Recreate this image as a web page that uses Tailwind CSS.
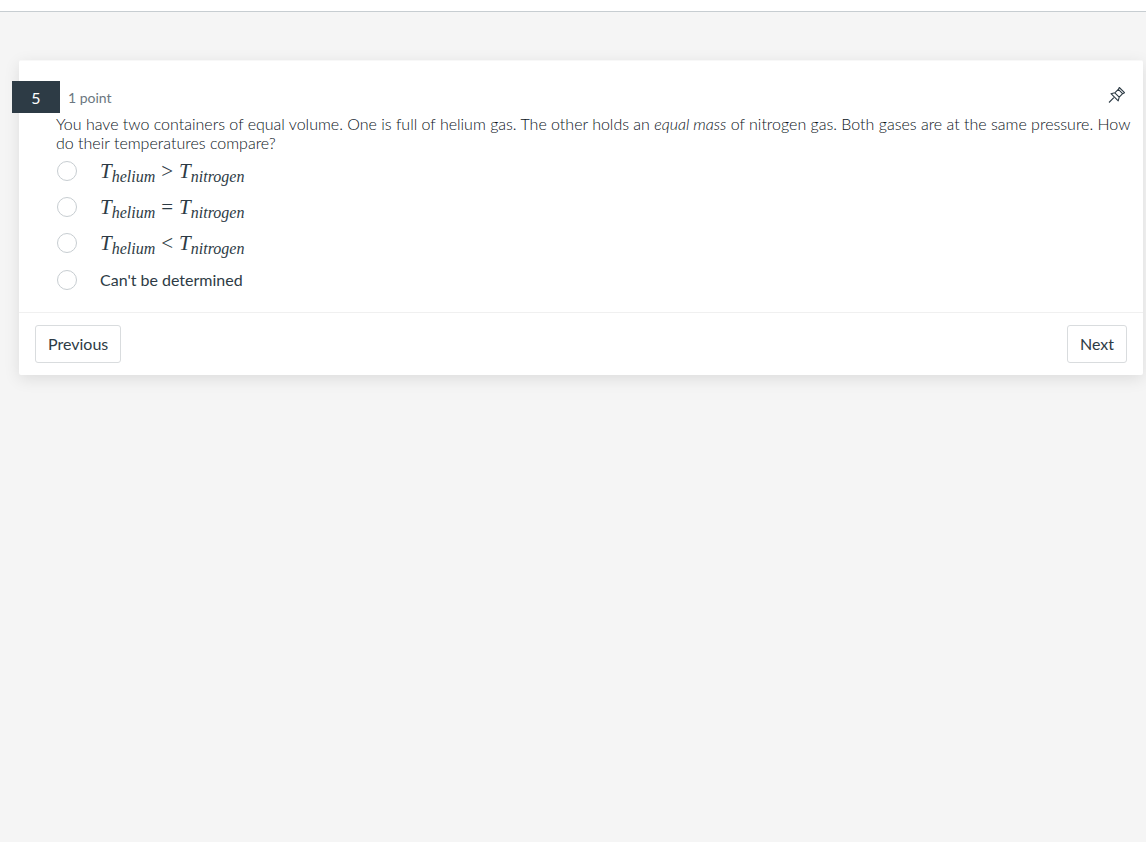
<!DOCTYPE html>
<html lang="en">
<head>
<meta charset="utf-8">
<meta name="viewport" content="width=device-width, initial-scale=1">
<title>Question 5</title>
<script src="https://cdn.jsdelivr.net/npm/@tailwindcss/browser@4"></script>
</head>
<body class="min-h-screen bg-[#f5f5f5] font-['Lato',sans-serif] text-base text-[#2d3b45]">
<header class="h-3 border-b border-[#c7cdd1] bg-white"></header>
<main class="pt-12 pr-[3px] pl-[19px]">
  <form class="rounded-xs border-t border-[#f8f8f8] bg-white shadow-[0_4px_16px_rgba(0,0,0,0.1)]">
    <div class="-ml-[7px] flex items-start pt-5 pr-4">
      <div class="flex h-8 w-12 items-center justify-center bg-[#2d3b45] pt-0.5 text-white">5</div>
      <div class="pt-[7px] pl-2 text-sm leading-5 text-[#6b7780]">1 point</div>
      <button type="button" aria-label="Pin question" class="mt-1 ml-auto">
        <svg class="size-5" viewBox="0 0 20 20" fill="none" stroke="currentColor" stroke-width="1.1" stroke-linejoin="round"><path d="M2 17.5 6.8 12.7M12.3 2.5 17.5 7.7 15.6 8.7 12.2 12.2 11.2 15.9 4 8.7 7.8 7.8 11.3 4.4ZM7.8 7.8 12.2 12.2M11.3 4.4 15.6 8.7"/></svg>
      </button>
    </div>
    <fieldset class="pr-1 pb-3 pl-[37px]">
      <legend class="pt-px pb-px leading-[19px] font-light text-[#0b141b]">You have two containers of equal volume. One is full of helium gas. The other holds an <em>equal mass</em> of nitrogen gas. Both gases are at the same pressure. How do their temperatures compare?</legend>
      <div class="flex flex-col">
        <label class="flex h-9 items-center"><input type="radio" name="answer" class="ml-px size-5 appearance-none rounded-full border border-[#c7cdd1] bg-white checked:border-[6px] checked:border-[#2d3b45]"><span class="ml-[23px] pt-0.5 font-['Liberation_Serif',serif] text-[21px] leading-6 whitespace-nowrap"><i>T</i><sub class="text-base italic">helium</sub><span class="mx-1.5">&gt;</span><i>T</i><sub class="text-base italic">nitrogen</sub></span></label>
        <label class="flex h-9 items-center"><input type="radio" name="answer" class="ml-px size-5 appearance-none rounded-full border border-[#c7cdd1] bg-white checked:border-[6px] checked:border-[#2d3b45]"><span class="ml-[23px] pt-0.5 font-['Liberation_Serif',serif] text-[21px] leading-6 whitespace-nowrap"><i>T</i><sub class="text-base italic">helium</sub><span class="mx-1.5">=</span><i>T</i><sub class="text-base italic">nitrogen</sub></span></label>
        <label class="flex h-9 items-center"><input type="radio" name="answer" class="ml-px size-5 appearance-none rounded-full border border-[#c7cdd1] bg-white checked:border-[6px] checked:border-[#2d3b45]"><span class="ml-[23px] pt-0.5 font-['Liberation_Serif',serif] text-[21px] leading-6 whitespace-nowrap"><i>T</i><sub class="text-base italic">helium</sub><span class="mx-1.5">&lt;</span><i>T</i><sub class="text-base italic">nitrogen</sub></span></label>
        <label class="flex h-[38px] items-center"><input type="radio" name="answer" class="ml-px size-5 appearance-none rounded-full border border-[#c7cdd1] bg-white checked:border-[6px] checked:border-[#2d3b45]"><span class="ml-[23px]">Can't be determined</span></label>
      </div>
    </fieldset>
    <div class="mt-px flex justify-between border-t border-[#f0f0f0] px-4 py-3">
      <button type="button" class="h-[38px] rounded-[3px] border border-[#d9dcde] bg-white px-3">Previous</button>
      <button type="button" class="h-[38px] rounded-[3px] border border-[#d9dcde] bg-white px-3">Next</button>
    </div>
  </form>
</main>
</body>
</html>
